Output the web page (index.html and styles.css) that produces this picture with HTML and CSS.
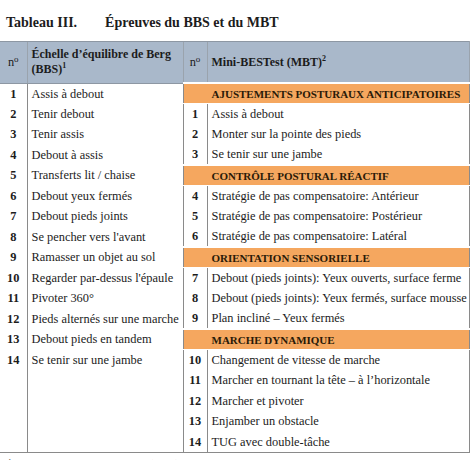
FILE: index.html
```html
<!DOCTYPE html>
<html lang="fr">
<head>
<meta charset="utf-8">
<link rel="stylesheet" href="styles.css">
</head>
<body>
<div class="title"><span class="tnum">Tableau III.</span><span class="ttext">Épreuves du BBS et du MBT</span></div>
<table class="tab">
<colgroup><col class="c1"><col class="c2"><col class="c3"><col class="c4"></colgroup>
<thead>
<tr class="head">
<th class="num">n<sup class="deg">o</sup></th>
<th class="txt">Échelle d’équilibre de Berg (BBS)<sup>1</sup></th>
<th class="num">n<sup class="deg">o</sup></th>
<th class="txt">Mini-BESTest (MBT)<sup>2</sup></th>
</tr>
</thead>
<tbody>
<tr><td class="num">1</td><td class="txt">Assis à debout</td><td class="sec" colspan="2">AJUSTEMENTS POSTURAUX ANTICIPATOIRES</td></tr>
<tr><td class="num">2</td><td class="txt">Tenir debout</td><td class="num">1</td><td class="txt">Assis à debout</td></tr>
<tr><td class="num">3</td><td class="txt">Tenir assis</td><td class="num">2</td><td class="txt">Monter sur la pointe des pieds</td></tr>
<tr><td class="num">4</td><td class="txt">Debout à assis</td><td class="num">3</td><td class="txt">Se tenir sur une jambe</td></tr>
<tr><td class="num">5</td><td class="txt">Transferts lit / chaise</td><td class="sec" colspan="2">CONTRÔLE POSTURAL RÉACTIF</td></tr>
<tr><td class="num">6</td><td class="txt">Debout yeux fermés</td><td class="num">4</td><td class="txt">Stratégie de pas compensatoire: Antérieur</td></tr>
<tr><td class="num">7</td><td class="txt">Debout pieds joints</td><td class="num">5</td><td class="txt">Stratégie de pas compensatoire: Postérieur</td></tr>
<tr><td class="num">8</td><td class="txt">Se pencher vers l'avant</td><td class="num">6</td><td class="txt">Stratégie de pas compensatoire: Latéral</td></tr>
<tr><td class="num">9</td><td class="txt">Ramasser un objet au sol</td><td class="sec" colspan="2">ORIENTATION SENSORIELLE</td></tr>
<tr><td class="num">10</td><td class="txt">Regarder par-dessus l'épaule</td><td class="num">7</td><td class="txt">Debout (pieds joints): Yeux ouverts, surface ferme</td></tr>
<tr><td class="num">11</td><td class="txt">Pivoter 360°</td><td class="num">8</td><td class="txt">Debout (pieds joints): Yeux fermés, surface mousse</td></tr>
<tr><td class="num">12</td><td class="txt">Pieds alternés sur une marche</td><td class="num">9</td><td class="txt">Plan incliné – Yeux fermés</td></tr>
<tr><td class="num">13</td><td class="txt">Debout pieds en tandem</td><td class="sec" colspan="2">MARCHE DYNAMIQUE</td></tr>
<tr><td class="num">14</td><td class="txt">Se tenir sur une jambe</td><td class="num">10</td><td class="txt">Changement de vitesse de marche</td></tr>
<tr><td class="num"></td><td class="txt"></td><td class="num">11</td><td class="txt">Marcher en tournant la tête – à l’horizontale</td></tr>
<tr><td class="num"></td><td class="txt"></td><td class="num">12</td><td class="txt">Marcher et pivoter</td></tr>
<tr><td class="num"></td><td class="txt"></td><td class="num">13</td><td class="txt">Enjamber un obstacle</td></tr>
<tr><td class="num"></td><td class="txt"></td><td class="num">14</td><td class="txt">TUG avec double-tâche</td></tr>
</tbody>
</table>
<div class="foot"><sup>1</sup>Traduit et adapté de Berg et al. (1989)</div>
</body>
</html>
```
FILE: styles.css
```css
html, body {
  margin: 0;
  padding: 0;
  background: #fff;
}
body {
  font-family: "Liberation Serif", "Times New Roman", Times, serif;
  color: #1c1c1c;
  width: 474px;
  overflow: hidden;
}
.title {
  height: 41px;
  box-sizing: border-box;
  padding: 14px 0 0 6px;
  font-size: 14px;
  font-weight: bold;
  line-height: 17px;
}
.ttext {
  margin-left: 28px;
}
.tab {
  width: 469px;
  table-layout: fixed;
  border-collapse: collapse;
  font-size: 12.4px;
}
.c1 { width: 27px; }
.c2 { width: 156px; }
.c3 { width: 24px; }
.c4 { width: 262px; }
.head th {
  background: #a9b8ca;
  height: 40px;
  font-size: 12px;
  font-weight: bold;
  border-top: 1px solid #8d97a3;
  border-bottom: 1px solid #8d97a3;
  border-left: 1px solid #9aa3ad;
  line-height: 15px;
  vertical-align: middle;
}
.head th:first-child { border-left: none; }
.head th:last-child { border-right: 1px solid #9aa3ad; }
.head th.txt {
  text-align: left;
  padding: 0 4px;
}
.head th.num {
  font-weight: normal;
  font-size: 12.4px;
  text-align: center;
  padding: 0;
}
sup {
  font-size: 8px;
  line-height: 0;
  vertical-align: 5px;
}
sup.deg {
  font-size: 9px;
  vertical-align: 4px;
}
tbody tr {
  height: 20.5px;
}
tbody td {
  padding: 0 4px;
  line-height: 14px;
  vertical-align: middle;
  border-left: 1px solid #8a8a8a;
  white-space: nowrap;
  overflow: hidden;
}
tbody td:first-child { border-left: none; }
tbody td:last-child { border-right: 1px solid #8a8a8a; }
tbody tr:last-child td { border-bottom: 1px solid #8a8a8a; }
td.num {
  text-align: center;
  font-weight: bold;
  padding: 0;
}
td.sec {
  background: #f5a75f;
  background-clip: padding-box;
  font-size: 11px;
  font-weight: bold;
  border-top: 2px solid #fff;
  border-bottom: 1px solid #fff;
  padding-left: 28px;
  color: #2a1a08;
}
.foot {
  font-size: 11px;
  padding: 4px 0 0 8px;
}
.foot sup {
  font-size: 7px;
  vertical-align: 4px;
}
```
